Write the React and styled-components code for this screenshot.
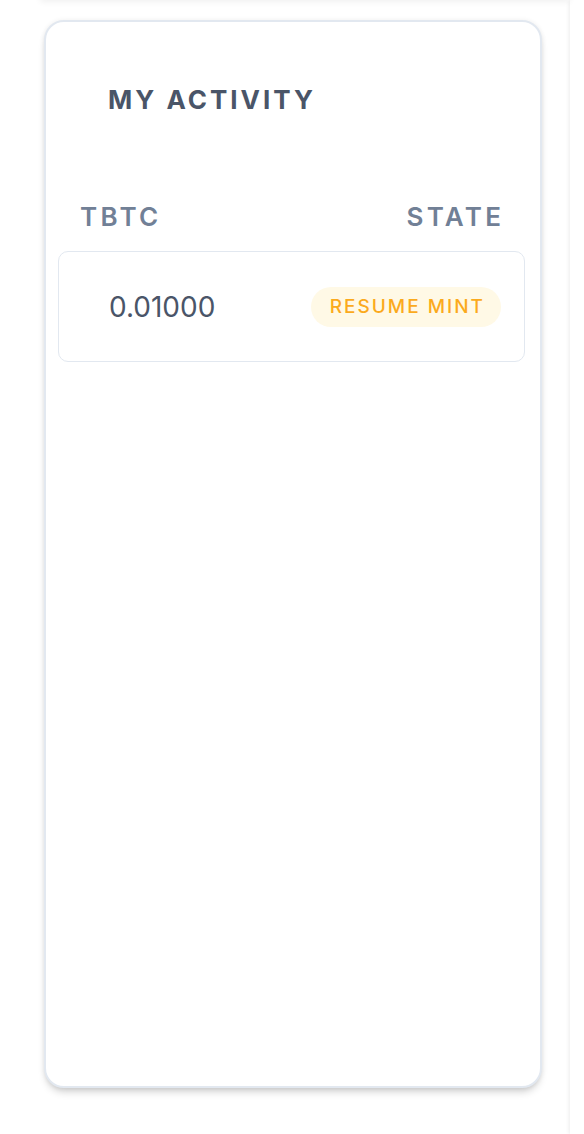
import React from 'react';
import styled, { createGlobalStyle } from 'styled-components';

const GlobalStyle = createGlobalStyle`
  html, body {
    margin: 0;
    padding: 0;
    background: #fff;
    font-family: Inter, "Noto Sans", sans-serif;
    -webkit-font-smoothing: antialiased;
  }
`;

const ACTIVITY = [
  { id: 1, amount: '0.01000', state: 'RESUME MINT' }
];

const Page = styled.div`
  position: relative;
  display: flex;
  align-items: flex-start;
  gap: 28px;
  height: 1134px;
  padding: 20px 0 0 44px;
  box-sizing: border-box;
  overflow: hidden;

  &::before {
    content: '';
    position: absolute;
    top: -10px;
    left: 40px;
    width: 530px;
    height: 10px;
    box-shadow: 0 2px 6px rgba(0, 0, 0, 0.06);
  }
`;

const Card = styled.section`
  flex: none;
  width: 498px;
  height: 1068px;
  box-sizing: border-box;
  background: #fff;
  border: 2px solid #e2e8f0;
  border-radius: 20px;
  box-shadow: 0 6px 8px -3px rgba(0, 0, 0, 0.22), 0 0 5px rgba(0, 0, 0, 0.07);
  padding: 62px 12px 0 12px;
`;

const Title = styled.h2`
  margin: 0 0 86px 50px;
  font-size: 26px;
  line-height: 31px;
  font-weight: 700;
  letter-spacing: 3px;
  color: #4a5568;
`;

const HeadRow = styled.div`
  display: flex;
  justify-content: space-between;
  padding: 0 27px 0 22px;
  margin-bottom: 19px;
`;

const HeadCell = styled.span`
  font-size: 26px;
  line-height: 31px;
  font-weight: 600;
  letter-spacing: 3.3px;
  margin-right: -3.3px;
  color: #718096;
`;

const Row = styled.div`
  display: flex;
  align-items: center;
  justify-content: space-between;
  height: 111px;
  box-sizing: border-box;
  margin-right: 3px;
  padding: 0 23px 0 50px;
  border: 1.5px solid #e2e8f0;
  border-radius: 10px;
`;

const Amount = styled.span`
  font-size: 28px;
  font-weight: 400;
  color: #4a5568;
`;

const Badge = styled.span`
  display: inline-flex;
  align-items: center;
  height: 40px;
  padding: 0 16px 0 19px;
  border-radius: 20px;
  background: #fff9e6;
  color: #fbaa1d;
  font-size: 19px;
  font-weight: 500;
  letter-spacing: 2px;
`;

const Neighbour = styled.aside`
  flex: none;
  width: 40px;
  height: 1134px;
  margin-top: -20px;
  background: #fff;
  box-shadow: -1px 0 4px rgba(0, 0, 0, 0.08);
`;

export default function App() {
  return (
    <>
      <GlobalStyle />
      <Page>
        <Card>
          <Title>MY ACTIVITY</Title>
          <HeadRow>
            <HeadCell>TBTC</HeadCell>
            <HeadCell>STATE</HeadCell>
          </HeadRow>
          {ACTIVITY.map(a => (
            <Row key={a.id}>
              <Amount>{a.amount}</Amount>
              <Badge>{a.state}</Badge>
            </Row>
          ))}
        </Card>
        <Neighbour />
      </Page>
    </>
  );
}
